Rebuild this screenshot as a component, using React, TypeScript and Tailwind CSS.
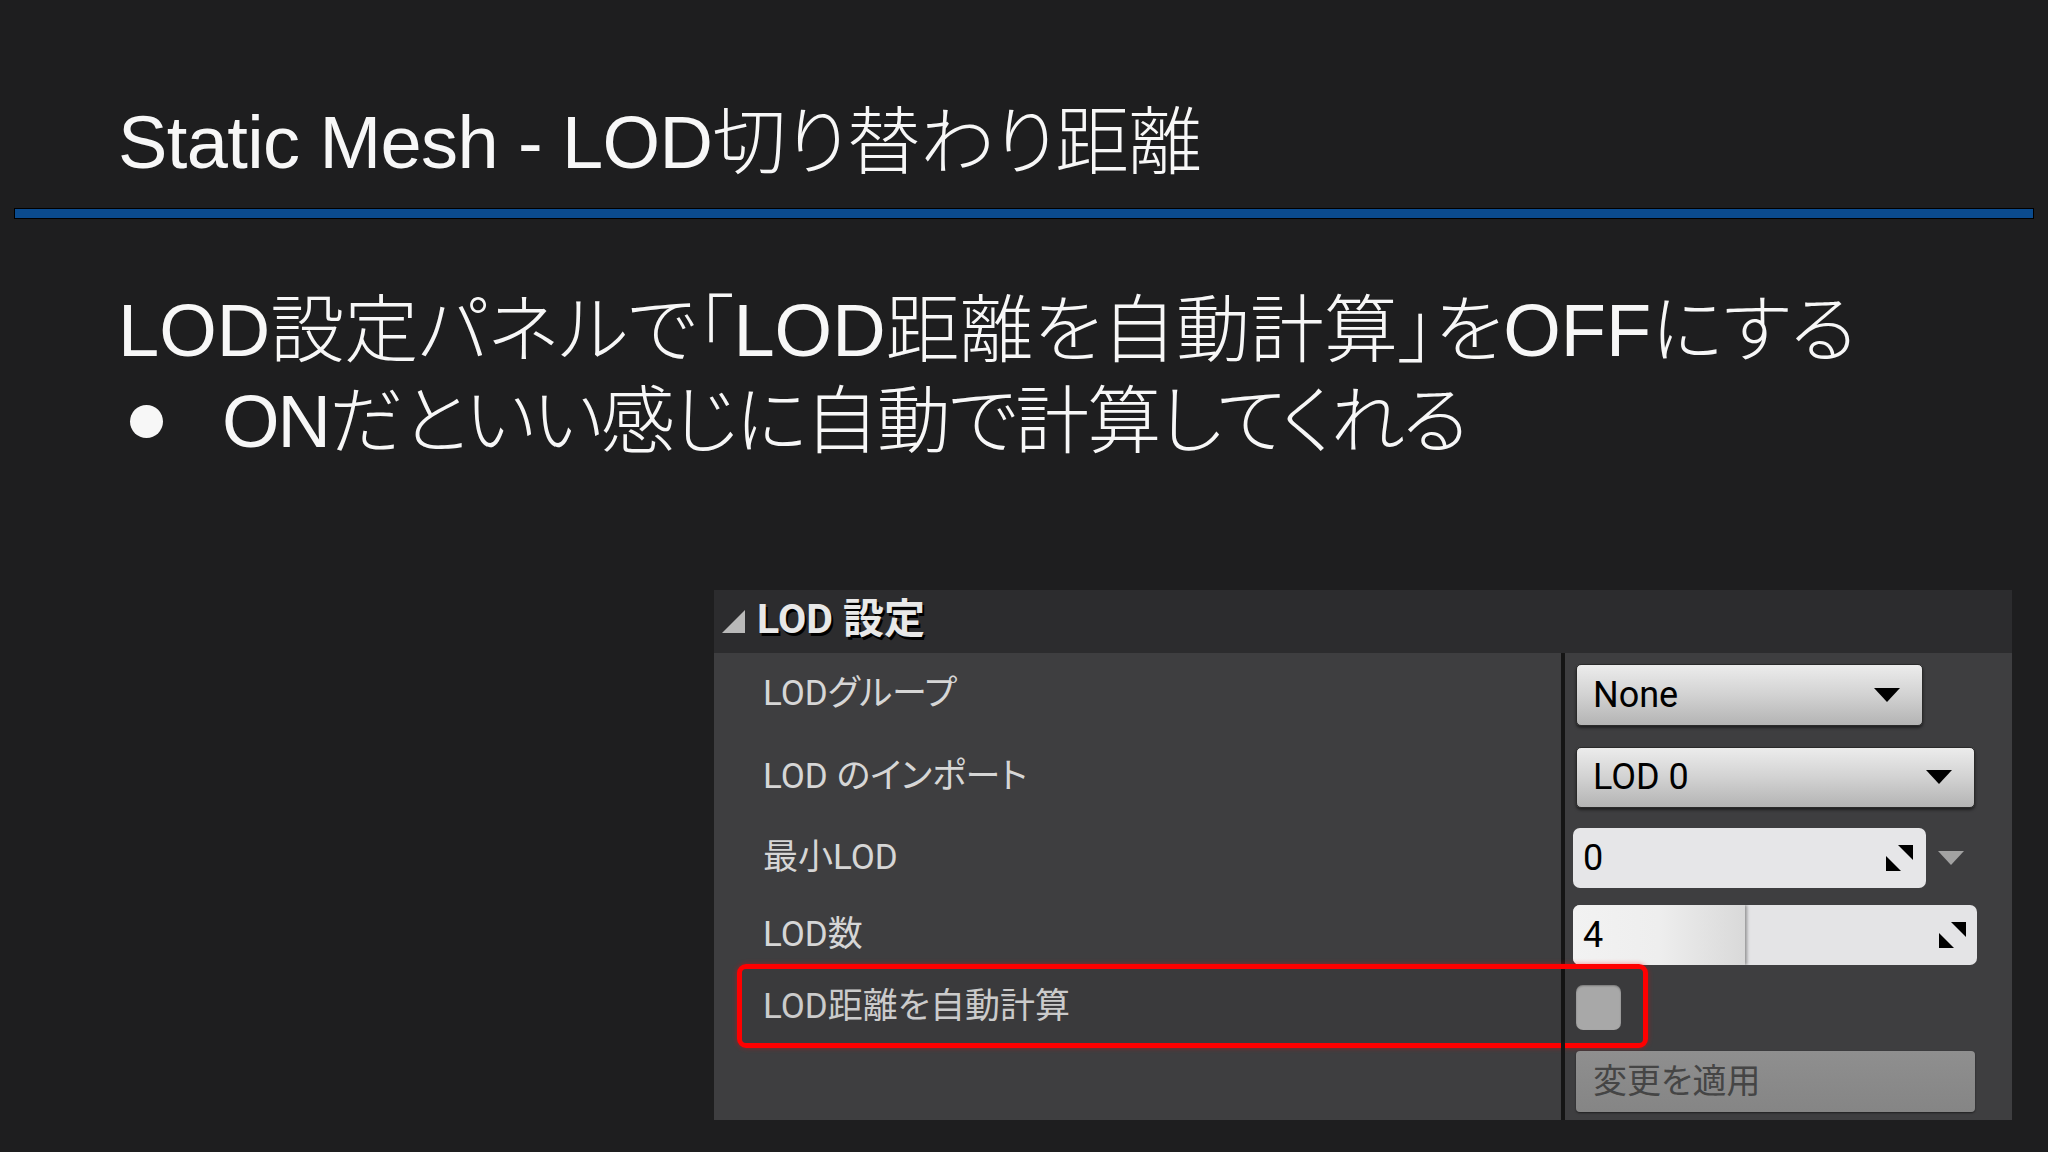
import type { ReactNode } from "react";

const slideFont = "[font-family:'Liberation_Sans','Noto_Sans_CJK_JP',sans-serif] [font-feature-settings:'palt']";
const ueFont = "[font-family:Roboto,'Noto_Sans_CJK_JP',sans-serif] [font-feature-settings:'palt']";

function DropArrow({ className = "" }: { className?: string }) {
  return (
    <svg width="26" height="14" viewBox="0 0 26 14" className={className}>
      <polygon points="0,0 26,0 13,14" fill="currentColor" />
    </svg>
  );
}

function SpinIcon() {
  return (
    <svg width="27" height="26" viewBox="0 0 27 26" className="text-black">
      <polygon points="12,0 27,0 27,15" fill="currentColor" />
      <polygon points="0,11 0,26 15,26" fill="currentColor" />
    </svg>
  );
}

function Row({
  height,
  label,
  children,
  highlight,
}: {
  height: string;
  label?: string;
  children?: ReactNode;
  highlight?: boolean;
}) {
  return (
    <div className={`relative grid grid-cols-[847px_4px_1fr] ${height}`}>
      <div className="flex items-center pl-[49px] text-[35px] text-[#d6d6d6]">{label}</div>
      <div className="bg-[#151515]" />
      <div className="flex items-center pl-[11px]">{children}</div>
      {highlight && (
        <div className="pointer-events-none absolute left-[23px] top-[-8px] h-[84px] w-[911px] rounded-[9px] border-[5px] border-[#ff0000] bg-black/5 shadow-[0_0_5px_rgba(255,0,0,0.45)]" />
      )}
    </div>
  );
}

export default function App() {
  return (
    <div className={`h-[1152px] w-[2048px] overflow-hidden bg-[#1e1e1f] font-light text-[#f7f7f7] ${slideFont}`}>
      <h1 className="pl-[118px] pt-[107px] text-[74px] font-light leading-[72px] tracking-[-0.6px]">
        Static Mesh - LOD切り替わり距離
      </h1>
      <div className="mx-[14px] mt-[29px] h-[11px] border border-black bg-[#0b4b8e]" />

      <div className="mt-[66px] pl-[118px] text-[74px] leading-[91px]">
        <p>LOD設定パネルで「LOD距離を自動計算」をOFFにする</p>
        <div className="flex items-center">
          <span className="ml-[12px] mr-[59px] h-[33px] w-[33px] rounded-full bg-[#f7f7f7]" />
          <span className="tracking-[-2px]">ONだといい感じに自動で計算してくれる</span>
        </div>
      </div>

      <div className={`ml-[714px] mt-[123px] w-[1298px] font-normal ${ueFont}`}>
        <div className="flex h-[63px] items-center bg-[#2c2c2e]">
          <svg width="23" height="23" viewBox="0 0 23 23" className="ml-[8px]">
            <polygon points="23,0 23,23 0,23" fill="#b9b9b9" />
          </svg>
          <span className="ml-[12px] mt-[-3px] text-[41px] font-bold text-[#e8e8e8] [text-shadow:2px_3px_0_#000]">
            LOD 設定
          </span>
        </div>

        <div className="bg-[#3e3e40]">
          <Row height="h-[83px]" label="LODグループ">
            <div className="flex h-[62px] w-[347px] items-center justify-between rounded-[5px] border border-[#2a2a2a] bg-gradient-to-b from-[#ececec] via-[#d2d2d2] to-[#b4b4b4] pl-[16px] pr-[22px] text-[36px] text-black shadow-[0_2px_3px_rgba(0,0,0,0.5)]">
              <span>None</span>
              <DropArrow className="text-black" />
            </div>
          </Row>
          <Row height="h-[82px]" label="LOD のインポート">
            <div className="flex h-[61px] w-[399px] items-center justify-between rounded-[5px] border border-[#2a2a2a] bg-gradient-to-b from-[#ececec] via-[#d2d2d2] to-[#b4b4b4] pl-[16px] pr-[22px] text-[36px] text-black shadow-[0_2px_3px_rgba(0,0,0,0.5)]">
              <span>LOD 0</span>
              <DropArrow className="text-black" />
            </div>
          </Row>
          <Row height="h-[80px]" label="最小LOD">
            <div className="-ml-[3px] flex items-center">
              <div className="flex h-[60px] w-[353px] items-center justify-between rounded-[7px] bg-[#e6e6e8] pl-[10px] pr-[13px] text-[36px] text-black">
                <span>0</span>
                <SpinIcon />
              </div>
              <DropArrow className="ml-[12px] text-[#a2a2a2]" />
            </div>
          </Row>
          <Row height="h-[74px]" label="LOD数">
            <div className="-ml-[3px] flex h-[60px] w-[404px] items-center overflow-hidden rounded-[7px] bg-[#e4e4e6] text-[36px] text-black">
              <div className="flex h-full w-[172px] items-center bg-gradient-to-r from-[#f2f2f2] via-[#eeeeee] to-[#d9d9d9] pl-[10px] shadow-[2px_0_3px_rgba(0,0,0,0.35)]">
                4
              </div>
              <div className="ml-auto mr-[11px]">
                <SpinIcon />
              </div>
            </div>
          </Row>
          <Row height="h-[70px]" label="LOD距離を自動計算" highlight>
            <div className="h-[45px] w-[45px] rounded-[7px] bg-[#b2b2b2] shadow-[inset_0_1px_2px_rgba(0,0,0,0.3)]" />
          </Row>
          <Row height="h-[78px]">
            <div className="flex h-[61px] w-[399px] items-center rounded-[4px] bg-gradient-to-b from-[#8f8f8f] via-[#8a8a8a] to-[#858585] pl-[17px] text-[34px] text-[#454545] shadow-[0_1px_2px_rgba(0,0,0,0.5)]">
              変更を適用
            </div>
          </Row>
        </div>
      </div>
    </div>
  );
}
